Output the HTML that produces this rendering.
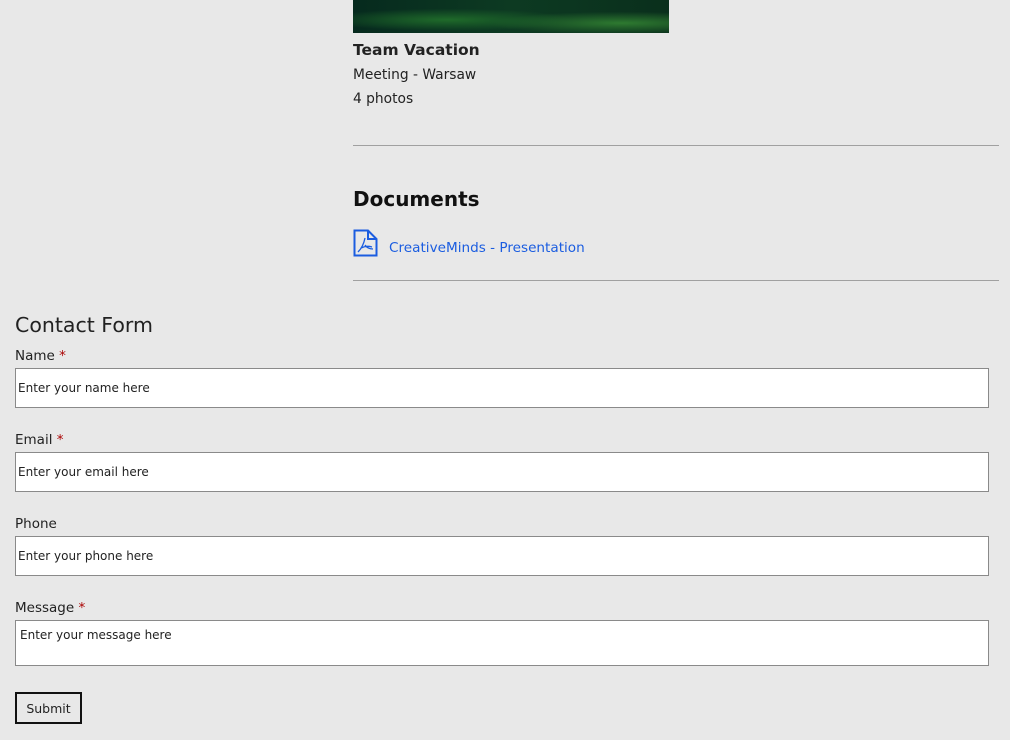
<!DOCTYPE html>
<html><head><style>
body{margin:0;width:1010px;height:740px;background:#e8e8e8;font-family:"DejaVu Sans","Liberation Sans",sans-serif;color:#222;position:relative;overflow:hidden}
.a{position:absolute;white-space:nowrap}
.img{left:353px;top:0;width:316px;height:33px;background:radial-gradient(ellipse at 30% 60%,#1f6a2a,transparent 40%),radial-gradient(ellipse at 85% 70%,#2e7a30,transparent 35%),linear-gradient(90deg,#062a1e,#0d3a22 50%,#0a2f1c)}
.hr{left:353px;width:646px;height:1px;background:#a0a0a0}
.lbl{left:15px;font-size:13.5px}
.star{color:#a00}
.in{left:15px;width:972px;height:38px;background:#fff;border:1px solid #8a8a8a;font-size:12px;line-height:38px;text-indent:2px}
</style></head><body>
<div class="a img"></div>
<div class="a" style="left:353px;top:41px;font-size:15.5px;font-weight:bold">Team Vacation</div>
<div class="a" style="left:353px;top:67px;font-size:13.8px">Meeting - Warsaw</div>
<div class="a" style="left:353px;top:91px;font-size:13.8px">4 photos</div>
<div class="a hr" style="top:145px"></div>
<div class="a" style="left:353px;top:187px;font-size:20px;font-weight:bold;color:#111">Documents</div>
<svg class="a" style="left:353px;top:229px" width="25" height="28" viewBox="0 0 25 28"><path d="M1.5 1.5H15L23.5 10V26.5H1.5Z M15 1.5V10H23.5" fill="none" stroke="#1b5de0" stroke-width="2"/><path d="M12 9C11 14 9 19 5 23M12 16C14 19 17 20 20 20M8 19C12 17 16 17 19 18" fill="none" stroke="#1b5de0" stroke-width="1.3"/></svg>
<div class="a" style="left:389px;top:240px;font-size:13.6px;color:#1b5de0">CreativeMinds - Presentation</div>
<div class="a hr" style="top:280px"></div>
<div class="a" style="left:15px;top:313px;font-size:20.5px">Contact Form</div>
<div class="a lbl" style="top:348px">Name <span class="star">*</span></div>
<div class="a in" style="top:368px">Enter your name here</div>
<div class="a lbl" style="top:432px">Email <span class="star">*</span></div>
<div class="a in" style="top:452px">Enter your email here</div>
<div class="a lbl" style="top:516px">Phone</div>
<div class="a in" style="top:536px">Enter your phone here</div>
<div class="a lbl" style="top:600px">Message <span class="star">*</span></div>
<div class="a in" style="top:620px;height:44px;line-height:28px;text-indent:4px">Enter your message here</div>
<div class="a" style="left:15px;top:692px;width:63px;height:28px;border:2px solid #111;font-size:12.5px;line-height:30px;text-align:center;background:#e8e8e8">Submit</div>
</body></html>
